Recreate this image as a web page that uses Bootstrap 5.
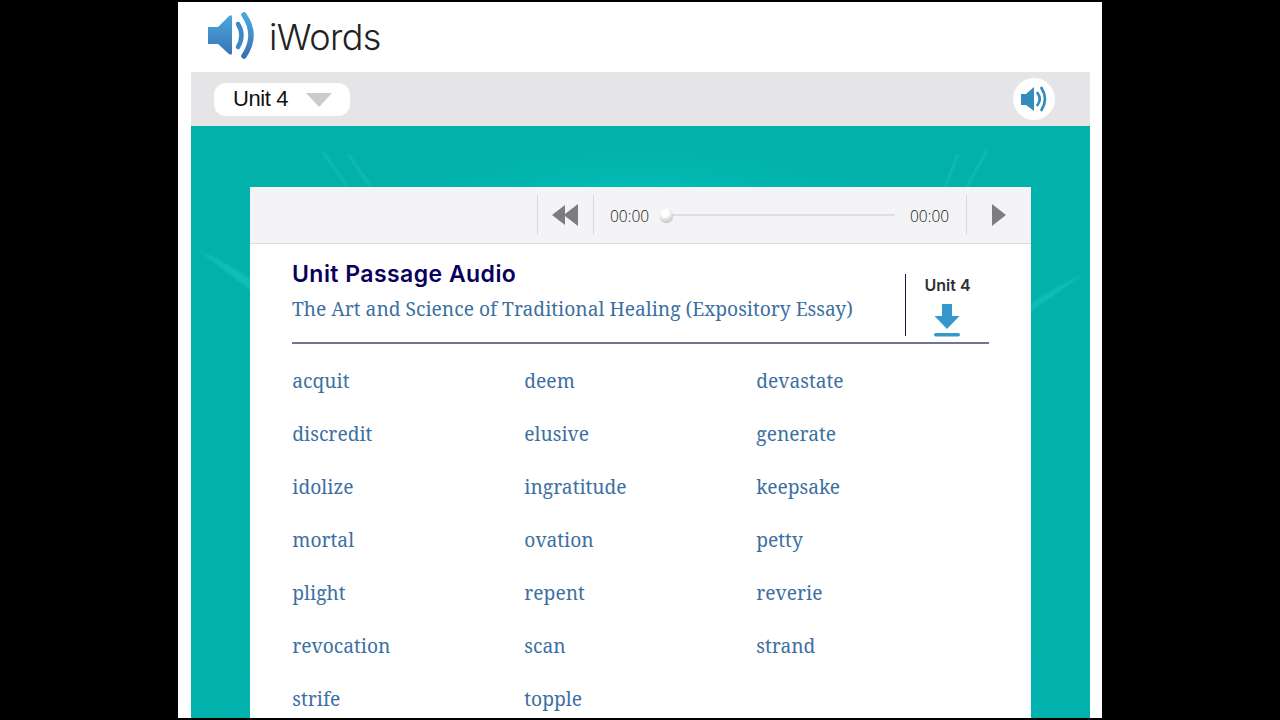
<!DOCTYPE html>
<html lang="en">
<head>
<meta charset="utf-8">
<meta name="viewport" content="width=device-width, initial-scale=1">
<title>iWords</title>
<link href="https://cdn.jsdelivr.net/npm/bootstrap@5.3.0/dist/css/bootstrap.min.css" rel="stylesheet">
<style>
body{background:#000;height:720px;overflow:hidden;padding:2px 178px}
svg{display:block;flex:none}
.sheet{height:716px;padding:0 12px 0 13px}
.masthead{height:70px;padding:0 0 4px 16px}
.masthead h1{font:300 36px/1 Inter,sans-serif;letter-spacing:-.6px;color:#222;margin:0 0 0 14px;padding-top:4px}
.unitbar{height:54px;background:#e5e5e8;padding:0 35px 0 23px;flex:none}
.unitpick{width:136px;height:33px;border-radius:12px;background:#fff;border:0;padding:0 18px 2px 19px;font:22px/31px "Liberation Sans",sans-serif;letter-spacing:-.4px;color:#111}
.unitpick svg{margin-top:3px}
.speak{width:42px;height:42px;padding:0;background:#fff;border:0}
.stage{background:#03b1ab;padding:61px 59px 0;flex:1;min-height:0;overflow:hidden}
.backdrop{left:0;top:0}
.sheetcard{width:781px;height:600px}
.player{height:57px;background:#f4f4f6;border-bottom:1px solid #dcdcde;flex:none}
.player button{border:0;background:none;padding:0}
.cell{height:40px;border-left:1px solid #d9d9db}
.clock{font:300 15.5px/20px "Open Sans",sans-serif;color:#111;width:41px;letter-spacing:0;padding-top:1px}
.track{width:228px;height:2px;background:#dfdfe1;border-radius:1px}
.knob{width:13px;height:13px;left:-7px;top:-5px;border-radius:50%;background:radial-gradient(circle at 40% 30%,#fff 30%,#bbb 90%);box-shadow:0 1px 1px #bbb}
.passage{margin:0 42px;height:100px;border-bottom:2px solid #77729a;flex:none}
.passage h2{font:600 23px/28px Inter,sans-serif;letter-spacing:.45px;color:#08005a;margin:16px 0 0;white-space:nowrap}
.serif,.words{font-family:"Droid Serif","Noto Serif","DejaVu Serif Condensed","DejaVu Serif",serif;font-size:19.22px;color:#3d70a2}
.serif{line-height:28px;margin:7px 0 0;white-space:nowrap}
.dl{margin-top:30px;height:62px;width:84px;border-left:1px solid #17124e;padding-right:1px}
.dl span{font:600 16px/22px Inter,sans-serif;color:#303033;padding-left:1px}
.words{display:grid;grid-template-columns:232px 232px 232px;grid-auto-rows:53px;margin:10px 42px 0 42.3px;line-height:53px}
.words a{color:inherit;text-decoration:none}
</style>
</head>
<body>
<main class="sheet bg-white d-flex flex-column">
  <header class="masthead d-flex align-items-center">
    <svg width="48" height="50" viewBox="0 0 48 50"><defs><linearGradient id="b" x1="0" x2="0" y1="0" y2="1"><stop stop-color="#49a9dd"/><stop offset="1" stop-color="#3973b5"/></linearGradient></defs><path d="M1 17H11L22 6Q25 4 25 7V43Q25 46 22 44L11 34H1Z" fill="url(#b)"/><path d="M31 14Q38 25 31 37" fill="none" stroke="#3d87c5" stroke-width="4.5" stroke-linecap="round"/><path d="M37 5Q51 25 37 46" fill="none" stroke="url(#b)" stroke-width="5.5" stroke-linecap="round"/></svg>
    <h1>iWords</h1>
  </header>
  <nav class="unitbar d-flex align-items-center justify-content-between">
    <button class="unitpick d-flex align-items-center justify-content-between"><span class="unitname">Unit 4</span><svg width="26" height="14"><path d="M0 0H26L13 14Z" fill="#cbcbcb"/></svg></button>
    <button class="speak rounded-circle d-flex align-items-center justify-content-center" aria-label="Play"><svg width="28" height="28" viewBox="0 0 28 28"><path d="M1 9H6L14 2V26L6 20H1Z" fill="#348cbd"/><path d="M17.5 8Q22 14 17.5 20M21.5 3Q28.5 14 21.5 25" fill="none" stroke="#348cbd" stroke-width="2.7" stroke-linecap="round"/></svg></button>
  </nav>
  <section class="stage position-relative">
    <svg class="backdrop position-absolute" width="899" height="592" viewBox="0 0 899 592" aria-hidden="true">
      <defs><radialGradient id="g"><stop stop-color="#00c2ba" stop-opacity=".8"/><stop offset="1" stop-color="#00b7b0" stop-opacity="0"/></radialGradient><filter id="s"><feGaussianBlur stdDeviation="1.1"/></filter></defs>
      <ellipse cx="450" cy="70" rx="270" ry="62" fill="url(#g)"/><ellipse cx="450" cy="610" rx="650" ry="110" fill="url(#g)"/>
      <g fill="none" stroke="#2dcac3" filter="url(#s)" opacity=".5"><path d="M360 28L386 62" opacity=".4"/><path d="M132 26L156 60M157 28L179 60" stroke-width="2"/><path d="M562 34Q553 45 548 62" opacity=".5"/><path d="M767 28L754 61M796 24L776 61" stroke-width="2"/></g>
      <g fill="#12c5bd" filter="url(#s)" opacity=".65"><path d="M5 123Q35 136 61 154V166Q31 142 5 123Z"/><path d="M895 147Q865 160 838 179V187Q867 166 895 147Z"/></g>
    </svg>
    <article class="sheetcard bg-white position-relative d-flex flex-column">
      <div class="player d-flex align-items-center justify-content-end">
        <div class="cell d-flex align-items-center justify-content-center" style="width:56px"><button aria-label="Rewind"><svg width="28" height="22"><path d="M0 11L13 1V10L26 0V22L13 12V21Z" fill="#7b7d7f"/></svg></button></div>
        <div class="cell d-flex align-items-center" style="width:373px;padding-left:16px">
          <span class="clock">00:00</span>
          <div class="track position-relative" style="margin-left:16px"><span class="knob position-absolute"></span></div>
          <span class="clock" style="margin-left:15px">00:00</span>
        </div>
        <div class="cell d-flex align-items-center" style="width:65px;padding-left:25px"><button aria-label="Play"><svg width="14" height="22"><path d="M0 0L14 11L0 22Z" fill="#7d7d7f"/></svg></button></div>
      </div>
      <div class="passage d-flex justify-content-between">
        <div><h2><span class="heading">Unit Passage Audio</span></h2><p class="serif"><span>The Art and Science of Traditional Healing (Expository Essay)</span></p></div>
        <div class="dl d-flex flex-column align-items-center"><span>Unit 4</span><svg width="26" height="33" viewBox="0 0 26 33" style="margin-top:8px"><path d="M8 0H18V12H25.5L13 25L.5 12H8Z" fill="#3498cc"/><rect y="29" width="26" height="3.5" rx="1.7" fill="#3498cc"/></svg></div>
      </div>
      <div class="words">
        <a>acquit</a><a>deem</a><a>devastate</a>
        <a>discredit</a><a>elusive</a><a>generate</a>
        <a>idolize</a><a>ingratitude</a><a>keepsake</a>
        <a>mortal</a><a>ovation</a><a>petty</a>
        <a>plight</a><a>repent</a><a>reverie</a>
        <a>revocation</a><a>scan</a><a>strand</a>
        <a>strife</a><a>topple</a>
      </div>
    </article>
  </section>
</main>
<script src="https://cdn.jsdelivr.net/npm/bootstrap@5.3.0/dist/js/bootstrap.bundle.min.js"></script>
</body>
</html>
